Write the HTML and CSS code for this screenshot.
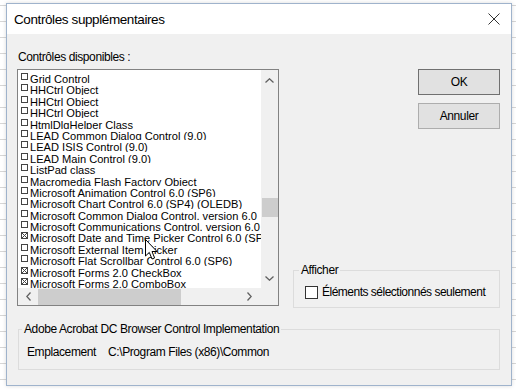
FILE: index.html
```html
<!DOCTYPE html>
<html lang="fr">
<head>
    <meta charset="UTF-8">
    <title>Contrôles supplémentaires</title>
    <link rel="stylesheet" href="styles.css">
</head>
<body>
    <div class="desktop">
        <div class="dialog">
            <div class="titlebar">
                <span class="title">Contrôles supplémentaires</span>
                <svg class="close" width="12" height="12" viewBox="0 0 12 12">
                    <path d="M0.5 0.5 L11.5 11.5 M11.5 0.5 L0.5 11.5" stroke="#333" stroke-width="1" fill="none"/>
                </svg>
            </div>
            <div class="dialog-body">
                <div class="main">
                    <div class="left">
                        <div class="label">Contrôles disponibles :</div>
                        <div class="listbox">
                            <ul class="items">
                                <li><span class="cb"></span>Grid Control</li>
                                <li><span class="cb"></span>HHCtrl Object</li>
                                <li><span class="cb"></span>HHCtrl Object</li>
                                <li><span class="cb"></span>HHCtrl Object</li>
                                <li><span class="cb"></span>HtmlDlgHelper Class</li>
                                <li><span class="cb"></span>LEAD Common Dialog Control (9.0)</li>
                                <li><span class="cb"></span>LEAD ISIS Control (9.0)</li>
                                <li><span class="cb"></span>LEAD Main Control (9.0)</li>
                                <li><span class="cb"></span>ListPad class</li>
                                <li><span class="cb"></span>Macromedia Flash Factory Object</li>
                                <li><span class="cb"></span>Microsoft Animation Control 6.0 (SP6)</li>
                                <li><span class="cb"></span>Microsoft Chart Control 6.0 (SP4) (OLEDB)</li>
                                <li><span class="cb"></span>Microsoft Common Dialog Control, version 6.0</li>
                                <li><span class="cb"></span>Microsoft Communications Control, version 6.0</li>
                                <li><span class="cb on"></span>Microsoft Date and Time Picker Control 6.0 (SP6)</li>
                                <li><span class="cb"></span>Microsoft External Item Picker</li>
                                <li><span class="cb"></span>Microsoft Flat Scrollbar Control 6.0 (SP6)</li>
                                <li><span class="cb on"></span>Microsoft Forms 2.0 CheckBox</li>
                                <li><span class="cb on"></span>Microsoft Forms 2.0 ComboBox</li>
                                <li><span class="cb on"></span>Microsoft Forms 2.0 CommandButton</li>
                            </ul>
                            <div class="vscroll">
                                <svg class="arrow" width="9" height="5" viewBox="0 0 9 5"><polyline points="0.5,4.5 4.5,0.8 8.5,4.5" fill="none" stroke="#606060" stroke-width="1.3"/></svg>
                                <div class="vthumb"></div>
                                <svg class="arrow" width="9" height="5" viewBox="0 0 9 5"><polyline points="0.5,0.5 4.5,4.2 8.5,0.5" fill="none" stroke="#606060" stroke-width="1.3"/></svg>
                            </div>
                            <div class="hscroll">
                                <svg class="arrow" width="5" height="9" viewBox="0 0 5 9"><polyline points="4.5,0.5 0.8,4.5 4.5,8.5" fill="none" stroke="#606060" stroke-width="1.3"/></svg>
                                <div class="hthumb"></div>
                                <svg class="arrow" width="5" height="9" viewBox="0 0 5 9"><polyline points="0.5,0.5 4.2,4.5 0.5,8.5" fill="none" stroke="#606060" stroke-width="1.3"/></svg>
                            </div>
                            <div class="corner"></div>
                        </div>
                    </div>
                    <div class="right">
                        <button class="btn default">OK</button>
                        <button class="btn">Annuler</button>
                        <fieldset class="group show">
                            <legend>Afficher</legend>
                            <label class="check"><span class="box"></span>Éléments sélectionnés seulement</label>
                        </fieldset>
                    </div>
                </div>
                <fieldset class="group info">
                    <legend>Adobe Acrobat DC Browser Control Implementation</legend>
                    <div class="path">
                        <span class="path-key">Emplacement</span>
                        <span>C:\Program Files (x86)\Common</span>
                    </div>
                </fieldset>
            </div>
        </div>
        <svg class="cursor" width="14" height="22" viewBox="0 0 14 22">
            <path d="M0.5 0.5 L0.5 17 L4.3 13.4 L7 20 L9.6 18.9 L7 12.5 L12 12.5 Z" fill="#fff" stroke="#000" stroke-width="1" stroke-linejoin="miter"/>
        </svg>
    </div>
</body>
</html>
```

FILE: styles.css
```css
body {
    margin: 0;
    font-family: "Liberation Sans", Arial, sans-serif;
    color: #000;
}
.desktop {
    position: relative;
    width: 516px;
    height: 390px;
    overflow: hidden;
    background-color: #fff;
    background-image:
        repeating-linear-gradient(to bottom, transparent 0, transparent 15px, #d6d6d6 15px, #d6d6d6 16px);
    background-position: 0 92px;
}
.dialog {
    position: absolute;
    left: 6px;
    top: 3px;
    width: 506px;
    height: 383px;
    box-sizing: border-box;
    border: 1px solid #9fb3cc;
    background-color: #f0f0f0;
    box-shadow: 0 0 4px rgba(0, 0, 0, 0.15);
    font-size: 12px;
    letter-spacing: -0.4px;
}
.titlebar {
    height: 30px;
    display: flex;
    align-items: center;
    justify-content: space-between;
    padding: 0 11px 0 7px;
    background-color: #fff;
}
.title {
    font-size: 13.5px;
    color: #000;
}
.close {
    display: block;
}
.dialog-body {
    padding: 15px 11px 0 10px;
}
.main {
    display: flex;
}
.left {
    flex: none;
    width: 262px;
}
.label {
    line-height: 16px;
    height: 16px;
    padding-left: 1px;
    margin-bottom: 4px;
}
.listbox {
    height: 237px;
    box-sizing: border-box;
    border: 1px solid #828282;
    display: grid;
    grid-template-columns: 1fr 17px;
    grid-template-rows: 1fr 17px;
    background-color: #fff;
}
.items {
    list-style: none;
    margin: 0;
    padding: 2px 0 0 3px;
    overflow: hidden;
    white-space: nowrap;
    font-size: 11.1px;
    letter-spacing: 0;
}
.items li {
    height: 11.4px;
    line-height: 14.5px;
    overflow: hidden;
    display: flex;
    align-items: flex-start;
}
.cb {
    flex: none;
    width: 5px;
    height: 5px;
    border: 1px solid #444;
    margin: 1px 2px 0 0;
    background-color: #fff;
}
.cb.on {
    background:
        linear-gradient(45deg, transparent 44%, #444 44%, #444 56%, transparent 56%),
        linear-gradient(-45deg, transparent 44%, #444 44%, #444 56%, transparent 56%);
}
.vscroll {
    background-color: #f0f0f0;
    display: flex;
    flex-direction: column;
    align-items: center;
    justify-content: space-between;
    padding: 8px 0 7px;
    position: relative;
}
.vthumb {
    position: absolute;
    left: 1px;
    right: 0;
    top: 128px;
    height: 19px;
    background-color: #cdcdcd;
}
.hscroll {
    background-color: #f0f0f0;
    display: flex;
    align-items: center;
    justify-content: space-between;
    padding: 0 9px 0 8px;
    position: relative;
}
.hthumb {
    position: absolute;
    left: 20px;
    width: 143px;
    top: 1px;
    bottom: 0;
    background-color: #cdcdcd;
}
.corner {
    background-color: #f0f0f0;
}
.right {
    flex: 1;
    margin-left: 14px;
    padding-top: 20px;
    display: flex;
    flex-direction: column;
    align-items: flex-end;
}
.btn {
    width: 82px;
    height: 26px;
    box-sizing: border-box;
    border: 1px solid #adadad;
    background-color: #e1e1e1;
    font-family: inherit;
    font-size: 12px;
    letter-spacing: -0.4px;
    color: #000;
    padding: 0;
}
.btn.default {
    border: 1px solid #707070;
}
.btn + .btn {
    margin-top: 8px;
}
.group {
    margin: 0;
    border: 1px solid #dcdcdc;
}
.group legend {
    padding: 0 2px;
    line-height: 16px;
}
.show {
    align-self: stretch;
    margin-top: auto;
    margin-bottom: -2px;
    padding: 6px 0 7px 5px;
}
.check {
    display: flex;
    align-items: center;
    height: 16px;
    line-height: 16px;
    margin-left: 6px;
    white-space: nowrap;
    letter-spacing: -0.5px;
}
.box {
    width: 13px;
    height: 13px;
    box-sizing: border-box;
    border: 1px solid #333;
    background-color: #fff;
    margin-right: 4px;
}
.info {
    margin: 15px 0 0 1px;
    padding: 7px 0 9px 3px;
}
.path {
    display: flex;
    line-height: 16px;
    padding-left: 5px;
    white-space: nowrap;
}
.path-key {
    flex: none;
    width: 81px;
}
.cursor {
    position: absolute;
    left: 145px;
    top: 239px;
}
```
